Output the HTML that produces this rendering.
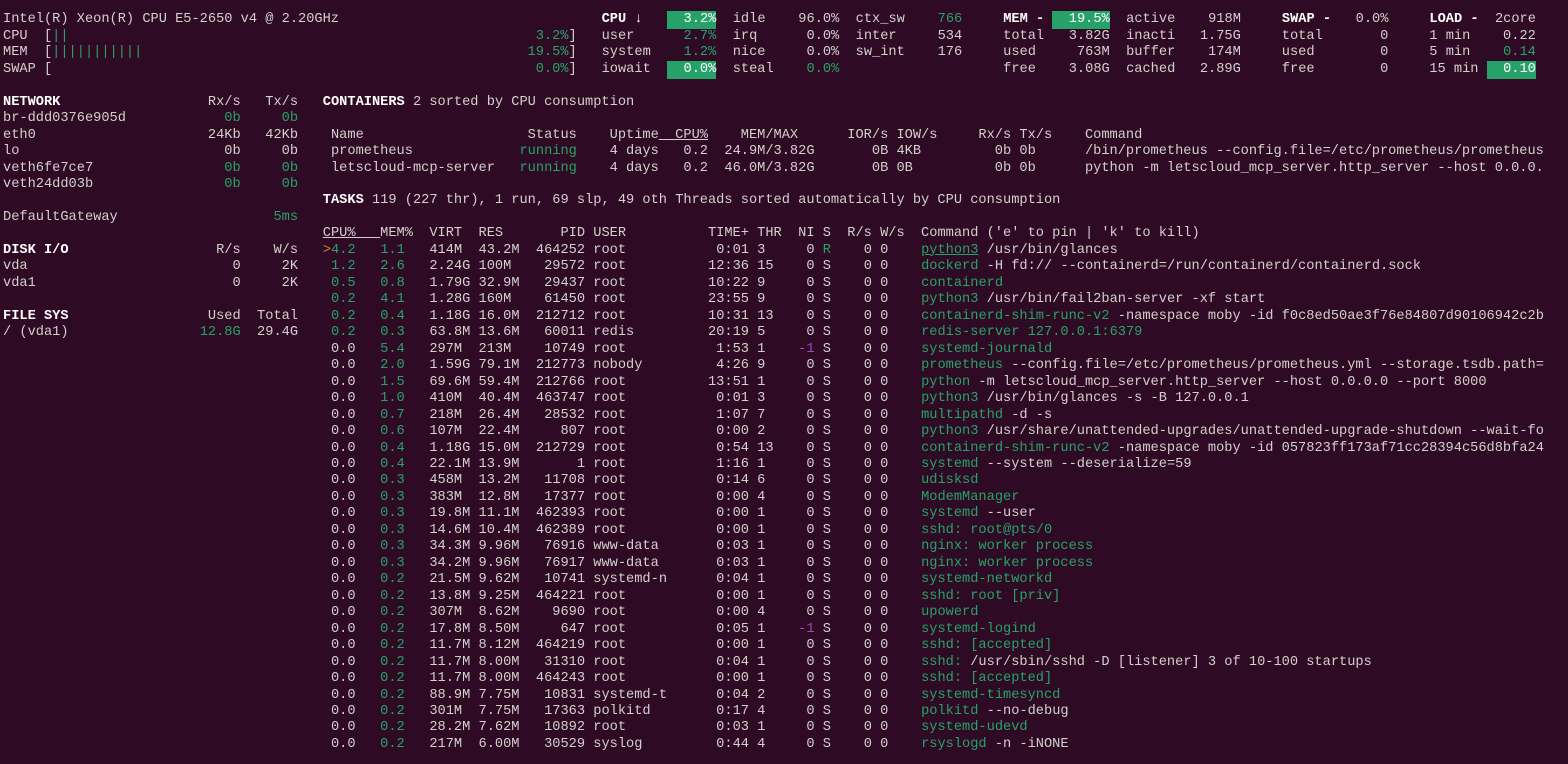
<!DOCTYPE html>
<html><head><meta charset="utf-8">
<style>
html,body{margin:0;padding:0;}
body{width:1568px;height:764px;overflow:hidden;background:#2f0a24;color:#d3d0cc;font-family:"Liberation Mono","DejaVu Sans Mono",monospace;font-size:13.67px;position:relative;}
pre{position:absolute;margin:0;font:inherit;line-height:16.47px;white-space:pre;}
i{font-style:normal;color:#26a269;}
b{font-weight:bold;color:#ffffff;}
.o{color:#c8893c;}
.p{color:#a347ba;}
.h{background:#26a269;color:#ffffff;padding:1px 0 2px 0;}
u{text-decoration:underline;}
</style></head><body>
<pre style="left:3px;top:12.3px">Intel(R) Xeon(R) CPU E5-2650 v4 @ 2.20GHz
CPU  [<i>||</i>                                                         <i>3.2%</i>]
MEM  [<i>|||||||||||</i>                                               <i>19.5%</i>]
SWAP [                                                           <i>0.0%</i>]</pre>
<pre style="left:601.6px;top:12.3px"><b>CPU ↓</b>   <span class="h">  3.2%</span>  idle    96.0%  ctx_sw    <i>766</i>     <b>MEM -</b> <span class="h">  19.5%</span>  active    918M     <b>SWAP -</b>   0.0%     <b>LOAD -</b>  2core
user      <i>2.7%</i>  irq      0.0%  inter     534     total   3.82G  inacti   1.75G     total       0     1 min    0.22
system    <i>1.2%</i>  nice     0.0%  sw_int    176     used     763M  buffer    174M     used        0     5 min    <i>0.14</i>
iowait  <span class="h">  0.0%</span>  steal    <i>0.0%</i>                    free    3.08G  cached   2.89G     free        0     15 min <span class="h">  0.10</span></pre>
<pre style="left:3px;top:94.65px"><b>NETWORK</b>                  Rx/s   Tx/s
br-ddd0376e905d            <i>0b</i>     <i>0b</i>
eth0                     24Kb   42Kb
lo                         0b     0b
veth6fe7ce7                <i>0b</i>     <i>0b</i>
veth24dd03b                <i>0b</i>     <i>0b</i>

DefaultGateway                   <i>5ms</i>

<b>DISK I/O</b>                  R/s    W/s
vda                         0     2K
vda1                        0     2K

<b>FILE SYS</b>                 Used  Total
/ (vda1)                <i>12.8G</i>  29.4G</pre>
<pre style="left:322.8px;top:94.65px"><b>CONTAINERS</b> 2 sorted by CPU consumption

 Name                    Status    Uptime<u>  CPU%</u>    MEM/MAX      IOR/s IOW/s     Rx/s Tx/s    Command
 prometheus             <i>running</i>    4 days   0.2  24.9M/3.82G       0B 4KB         0b 0b      /bin/prometheus --config.file=/etc/prometheus/prometheus
 letscloud-mcp-server   <i>running</i>    4 days   0.2  46.0M/3.82G       0B 0B          0b 0b      python -m letscloud_mcp_server.http_server --host 0.0.0.</pre>
<pre style="left:322.8px;top:193.47px"><b>TASKS</b> 119 (227 thr), 1 run, 69 slp, 49 oth Threads sorted automatically by CPU consumption

<u>CPU%   </u>MEM%  VIRT  RES       PID USER          TIME+ THR  NI S  R/s W/s  Command ('e' to pin | 'k' to kill)
<span class="o">&gt;</span><i>4.2</i>   <i>1.1</i>   414M  43.2M  464252 root           0:01 3     0 <i>R</i>    0 0    <i><u>python3</u></i> /usr/bin/glances
 <i>1.2</i>   <i>2.6</i>   2.24G 100M    29572 root          12:36 15    0 S    0 0    <i>dockerd</i> -H fd:// --containerd=/run/containerd/containerd.sock
 <i>0.5</i>   <i>0.8</i>   1.79G 32.9M   29437 root          10:22 9     0 S    0 0    <i>containerd</i>
 <i>0.2</i>   <i>4.1</i>   1.28G 160M    61450 root          23:55 9     0 S    0 0    <i>python3</i> /usr/bin/fail2ban-server -xf start
 <i>0.2</i>   <i>0.4</i>   1.18G 16.0M  212712 root          10:31 13    0 S    0 0    <i>containerd-shim-runc-v2</i> -namespace moby -id f0c8ed50ae3f76e84807d90106942c2b
 <i>0.2</i>   <i>0.3</i>   63.8M 13.6M   60011 redis         20:19 5     0 S    0 0    <i>redis-server 127.0.0.1:6379</i>
 0.0   <i>5.4</i>   297M  213M    10749 root           1:53 1    <span class="p">-1</span> S    0 0    <i>systemd-journald</i>
 0.0   <i>2.0</i>   1.59G 79.1M  212773 nobody         4:26 9     0 S    0 0    <i>prometheus</i> --config.file=/etc/prometheus/prometheus.yml --storage.tsdb.path=
 0.0   <i>1.5</i>   69.6M 59.4M  212766 root          13:51 1     0 S    0 0    <i>python</i> -m letscloud_mcp_server.http_server --host 0.0.0.0 --port 8000
 0.0   <i>1.0</i>   410M  40.4M  463747 root           0:01 3     0 S    0 0    <i>python3</i> /usr/bin/glances -s -B 127.0.0.1
 0.0   <i>0.7</i>   218M  26.4M   28532 root           1:07 7     0 S    0 0    <i>multipathd</i> -d -s
 0.0   <i>0.6</i>   107M  22.4M     807 root           0:00 2     0 S    0 0    <i>python3</i> /usr/share/unattended-upgrades/unattended-upgrade-shutdown --wait-fo
 0.0   <i>0.4</i>   1.18G 15.0M  212729 root           0:54 13    0 S    0 0    <i>containerd-shim-runc-v2</i> -namespace moby -id 057823ff173af71cc28394c56d8bfa24
 0.0   <i>0.4</i>   22.1M 13.9M       1 root           1:16 1     0 S    0 0    <i>systemd</i> --system --deserialize=59
 0.0   <i>0.3</i>   458M  13.2M   11708 root           0:14 6     0 S    0 0    <i>udisksd</i>
 0.0   <i>0.3</i>   383M  12.8M   17377 root           0:00 4     0 S    0 0    <i>ModemManager</i>
 0.0   <i>0.3</i>   19.8M 11.1M  462393 root           0:00 1     0 S    0 0    <i>systemd</i> --user
 0.0   <i>0.3</i>   14.6M 10.4M  462389 root           0:00 1     0 S    0 0    <i>sshd: root@pts/0</i>
 0.0   <i>0.3</i>   34.3M 9.96M   76916 www-data       0:03 1     0 S    0 0    <i>nginx: worker process</i>
 0.0   <i>0.3</i>   34.2M 9.96M   76917 www-data       0:03 1     0 S    0 0    <i>nginx: worker process</i>
 0.0   <i>0.2</i>   21.5M 9.62M   10741 systemd-n      0:04 1     0 S    0 0    <i>systemd-networkd</i>
 0.0   <i>0.2</i>   13.8M 9.25M  464221 root           0:00 1     0 S    0 0    <i>sshd: root [priv]</i>
 0.0   <i>0.2</i>   307M  8.62M    9690 root           0:00 4     0 S    0 0    <i>upowerd</i>
 0.0   <i>0.2</i>   17.8M 8.50M     647 root           0:05 1    <span class="p">-1</span> S    0 0    <i>systemd-logind</i>
 0.0   <i>0.2</i>   11.7M 8.12M  464219 root           0:00 1     0 S    0 0    <i>sshd: [accepted]</i>
 0.0   <i>0.2</i>   11.7M 8.00M   31310 root           0:04 1     0 S    0 0    <i>sshd:</i> /usr/sbin/sshd -D [listener] 3 of 10-100 startups
 0.0   <i>0.2</i>   11.7M 8.00M  464243 root           0:00 1     0 S    0 0    <i>sshd: [accepted]</i>
 0.0   <i>0.2</i>   88.9M 7.75M   10831 systemd-t      0:04 2     0 S    0 0    <i>systemd-timesyncd</i>
 0.0   <i>0.2</i>   301M  7.75M   17363 polkitd        0:17 4     0 S    0 0    <i>polkitd</i> --no-debug
 0.0   <i>0.2</i>   28.2M 7.62M   10892 root           0:03 1     0 S    0 0    <i>systemd-udevd</i>
 0.0   <i>0.2</i>   217M  6.00M   30529 syslog         0:44 4     0 S    0 0    <i>rsyslogd</i> -n -iNONE</pre>
</body></html>
